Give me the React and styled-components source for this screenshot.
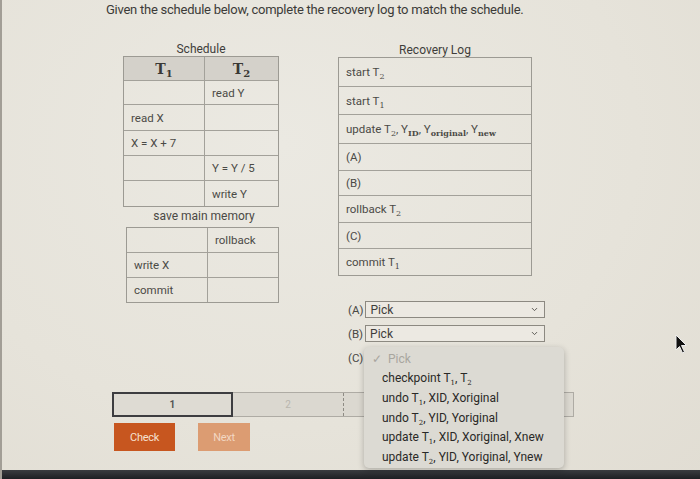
import React from 'react';
import styled, { createGlobalStyle } from 'styled-components';
import { ChevronDown } from 'lucide-react';

const GlobalStyle = createGlobalStyle`
  body {
    margin: 0;
    background: #e8e5dd;
    font-family: Roboto, "Liberation Sans", sans-serif;
    color: #4a4945;
  }
`;

const Page = styled.div`
  position: relative;
  width: 700px;
  height: 479px;
  overflow: hidden;
  display: flex;
  flex-direction: column;
  background: radial-gradient(ellipse at 40% 30%, #ebe9e2 0%, #e6e3da 60%, #e1ddd3 100%);
  border-left: 2px solid #a29e96;
  box-sizing: border-box;
`;

const Title = styled.div`
  padding: 2px 0 0 104px;
  font-size: 13px;
  letter-spacing: -0.25px;
  line-height: 16px;
  color: #3c3b38;
`;

const Columns = styled.div`
  display: flex;
  align-items: flex-start;
  margin-top: 24px;
  padding-left: 121px;
`;

const ScheduleCol = styled.div`
  width: 156px;
`;

const LogCol = styled.div`
  width: 194px;
  margin-left: 59px;
  margin-top: 1px;
`;

const Caption = styled.div`
  text-align: center;
  font-size: 12px;
  line-height: 14px;
  color: ${(p) => (p.$dark ? '#3e3d3a' : '#4a4945')};
  margin: ${(p) => p.$margin || '0'};
`;

const Grid = styled.div`
  display: grid;
  grid-template-columns: 80px 1fr;
  border: 1px solid #9c9a93;
  margin-left: ${(p) => p.$indent || 0}px;
`;

const Cell = styled.div`
  height: ${(p) => p.$h || 24}px;
  display: flex;
  align-items: center;
  font-size: 11.5px;
  color: #4b4a46;
  border-top: ${(p) => (p.$first ? 'none' : '1px solid #a3a19a')};
  border-left: ${(p) => (p.$right ? '1px solid #a3a19a' : 'none')};
  background: ${(p) => (p.$head ? '#d4d1ca' : 'transparent')};
  justify-content: ${(p) => (p.$head ? 'center' : 'flex-start')};
  padding-left: ${(p) => (p.$head ? 0 : 7)}px;
`;

const MathT = styled.span`
  font-family: "DejaVu Serif", "Liberation Serif", serif;
  font-weight: bold;
  font-size: 14px;
  color: #3a3936;
`;

const Sub = styled.sub`
  font-family: "DejaVu Serif", "Liberation Serif", serif;
  font-size: ${(p) => p.$size || 9}px;
  font-weight: ${(p) => (p.$bold ? 'bold' : 'normal')};
  vertical-align: -3px;
  line-height: 0;
`;

const LogTable = styled.div`
  border: 1px solid #9c9a93;
`;

const LogRow = styled.div`
  height: ${(p) => p.$h}px;
  display: flex;
  align-items: center;
  padding-left: 7px;
  font-size: 11.5px;
  color: #4b4a46;
  border-top: ${(p) => (p.$first ? 'none' : '1px solid #a3a19a')};
`;

const Answers = styled.div`
  display: flex;
  flex-direction: column;
  gap: 7px;
  margin-top: 25px;
  padding-left: 10px;
`;

const AnswerRow = styled.div`
  display: flex;
  align-items: center;
  gap: 2px;
  height: 17px;
  font-size: 11.5px;
  white-space: nowrap;
`;

const Select = styled.div`
  flex: 0 0 auto;
  box-sizing: border-box;
  width: 180px;
  height: 17px;
  border: 1px solid #8c8981;
  background: #ece9e2;
  display: flex;
  align-items: center;
  justify-content: space-between;
  padding: 0 5px 0 4px;
  font-size: 12px;
  color: #3e3d3a;
  svg {
    color: #55534e;
  }
`;

const Progress = styled.div`
  display: flex;
  margin: 26px 0 0 110px;
  width: 462px;
  height: 25px;
  border: 1px solid #aeaba4;
  background: #dbd8d0;
  box-sizing: border-box;
`;

const Step = styled.div`
  width: ${(p) => p.$w}px;
  display: flex;
  align-items: center;
  justify-content: center;
  font-size: 10px;
  font-weight: ${(p) => (p.$active ? 'bold' : 'normal')};
  color: ${(p) => (p.$active ? '#555' : '#b9b6ae')};
  border: ${(p) => (p.$active ? '2px solid #3d3d40' : 'none')};
  border-right: ${(p) => (p.$dashed ? '1px dashed #8e8b84' : p.$active ? '2px solid #3d3d40' : 'none')};
  margin: ${(p) => (p.$active ? '-1px 0 -1px -1px' : '0')};
  background: ${(p) => (p.$active ? '#dedbd3' : 'transparent')};
`;

const Buttons = styled.div`
  display: flex;
  gap: 23px;
  margin: 6px 0 0 112px;
`;

const Button = styled.div`
  width: ${(p) => p.$w}px;
  height: 28px;
  display: flex;
  align-items: center;
  justify-content: center;
  font-size: 11px;
  letter-spacing: -0.3px;
  color: ${(p) => (p.$muted ? '#f2d7c2' : '#f6e1d2')};
  background: ${(p) => (p.$muted ? '#dc9c72' : '#c7561f')};
`;

const Bezel = styled.div`
  margin-top: auto;
  height: 9px;
  background: linear-gradient(#3a3c40, #1d1f23);
`;

const Menu = styled.div`
  position: absolute;
  left: 362px;
  top: 347px;
  width: 200px;
  height: 121px;
  background: #dcdad3;
  border-radius: 5px;
  box-shadow: 0 2px 6px rgba(0, 0, 0, 0.25);
  padding-top: 2px;
  box-sizing: border-box;
`;

const MenuItem = styled.div`
  height: 19.6px;
  display: flex;
  align-items: center;
  padding-left: ${(p) => (p.$check ? 8 : 18)}px;
  font-size: 12px;
  color: ${(p) => (p.$check ? '#a9a69f' : '#2a2927')};
  white-space: nowrap;
`;

const Cursor = styled.svg`
  position: absolute;
  left: 673px;
  top: 334px;
`;

const schedule = [
  ['', 'read Y', 23],
  ['read X', '', 25],
  ['X = X + 7', '', 24],
  ['', 'Y = Y / 5', 24],
  ['', 'write Y', 25],
];

const after = [
  ['', 'rollback'],
  ['write X', ''],
  ['commit', ''],
];

const T = ({ n }) => (
  <>T<Sub $size={8}>{n}</Sub></>
);

function App() {
  return (
    <Page>
      <GlobalStyle />
      <Title>Given the schedule below, complete the recovery log to match the schedule.</Title>
      <Columns>
        <ScheduleCol>
          <Caption $dark>Schedule</Caption>
          <Grid>
            <Cell $first $head $h={23}><MathT>T<Sub $bold $size={10}>1</Sub></MathT></Cell>
            <Cell $first $head $right $h={23}><MathT>T<Sub $bold $size={10}>2</Sub></MathT></Cell>
            {schedule.map(([a, b, h], i) => (
              <React.Fragment key={i}>
                <Cell $h={h}>{a}</Cell>
                <Cell $h={h} $right>{b}</Cell>
              </React.Fragment>
            ))}
          </Grid>
          <Caption $margin="2px 0 4px 6px">save main memory</Caption>
          <Grid $indent={3}>
            {after.map(([a, b], i) => (
              <React.Fragment key={i}>
                <Cell $first={i === 0} $h={24}>{a}</Cell>
                <Cell $first={i === 0} $right $h={24}>{b}</Cell>
              </React.Fragment>
            ))}
          </Grid>
        </ScheduleCol>
        <LogCol>
          <Caption $dark>Recovery Log</Caption>
          <LogTable>
            <LogRow $first $h={28}><span>start <T n="2" /></span></LogRow>
            <LogRow $h={27}><span>start <T n="1" /></span></LogRow>
            <LogRow $h={28}>
              <span>
                update T<Sub $size={8}>2</Sub>, Y<Sub $size={8} $bold>ID</Sub>, Y<Sub $size={8} $bold>original</Sub>, Y<Sub $size={8} $bold>new</Sub>
              </span>
            </LogRow>
            <LogRow $h={26}>(A)</LogRow>
            <LogRow $h={24}>(B)</LogRow>
            <LogRow $h={26}><span>rollback <T n="2" /></span></LogRow>
            <LogRow $h={25}>(C)</LogRow>
            <LogRow $h={26}><span>commit <T n="1" /></span></LogRow>
          </LogTable>
          <Answers>
            <AnswerRow>(A)<Select>Pick<ChevronDown size={9} strokeWidth={2.5} /></Select></AnswerRow>
            <AnswerRow>(B)<Select>Pick<ChevronDown size={9} strokeWidth={2.5} /></Select></AnswerRow>
            <AnswerRow>(C)</AnswerRow>
          </Answers>
        </LogCol>
      </Columns>
      <Progress>
        <Step $active $w={118}>1</Step>
        <Step $w={111} $dashed>2</Step>
        <Step $w={231} />
      </Progress>
      <Buttons>
        <Button $w={61}>Check</Button>
        <Button $w={52} $muted>Next</Button>
      </Buttons>
      <Bezel />
      <Menu>
        <MenuItem $check>✓&nbsp;&nbsp;Pick</MenuItem>
        <MenuItem><span>checkpoint T<Sub $size={7}>1</Sub>, T<Sub $size={7}>2</Sub></span></MenuItem>
        <MenuItem><span>undo T<Sub $size={7}>1</Sub>, XID, Xoriginal</span></MenuItem>
        <MenuItem><span>undo T<Sub $size={7}>2</Sub>, YID, Yoriginal</span></MenuItem>
        <MenuItem><span>update T<Sub $size={7}>1</Sub>, XID, Xoriginal, Xnew</span></MenuItem>
        <MenuItem><span>update T<Sub $size={7}>2</Sub>, YID, Yoriginal, Ynew</span></MenuItem>
      </Menu>
      <Cursor width="14" height="20" viewBox="0 0 14 20">
        <path d="M1 1 L1 16 L4.5 12.5 L7.5 19 L9.5 18 L6.5 11.5 L11.5 11.5 Z" fill="#111" stroke="#eee" strokeWidth="1" />
      </Cursor>
    </Page>
  );
}

export default App;
